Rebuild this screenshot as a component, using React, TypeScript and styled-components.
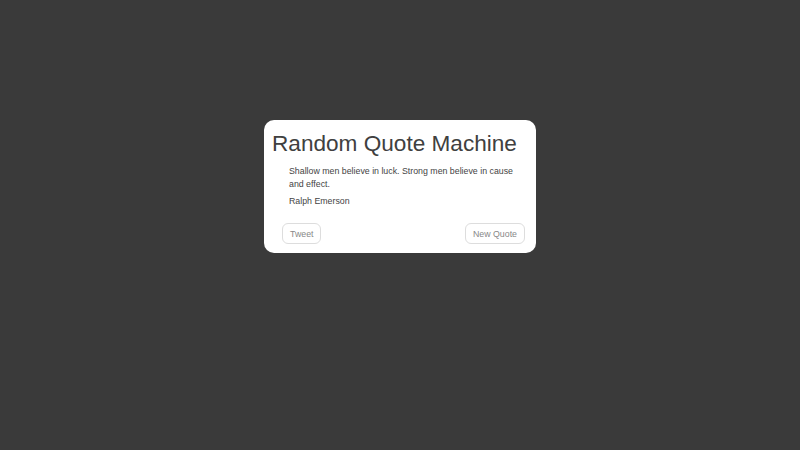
import React from 'react';
import styled, { createGlobalStyle } from 'styled-components';

const GlobalStyle = createGlobalStyle`
  html, body {
    margin: 0;
    padding: 0;
    height: 100%;
    background: #3a3a3a;
    font-family: "Liberation Sans", Arial, sans-serif;
  }
  #root {
    height: 100%;
  }
`

const quote = {
  text: 'Shallow men believe in luck. Strong men believe in cause and effect.',
  author: 'Ralph Emerson',
}

export default function App() {
  return (
    <>
      <GlobalStyle />
      <Page>
        <Card id="quote-box">
          <Title>Random Quote Machine</Title>
          <QuoteBody>
            <QuoteText id="text">{quote.text}</QuoteText>
            <Author id="author">{quote.author}</Author>
          </QuoteBody>
          <Actions>
            <Button id="tweet-quote">Tweet</Button>
            <Button id="new-quote">New Quote</Button>
          </Actions>
        </Card>
      </Page>
    </>
  );
}

const Page = styled.div`
  height: 100%;
  box-sizing: border-box;
  padding-top: 120px;
  display: flex;
  align-items: flex-start;
  justify-content: center;
`

const Card = styled.div`
  width: 272px;
  box-sizing: border-box;
  background: #fff;
  border-radius: 10px;
  padding: 11px 11px 9px 8px;
`

const Title = styled.h1`
  margin: 0;
  font-size: 22.6px;
  font-weight: 400;
  color: #404040;
  line-height: 26px;
  white-space: nowrap;
`

const QuoteBody = styled.div`
  padding: 8px 8px 0 17px;
`

const QuoteText = styled.p`
  margin: 0;
  font-size: 8.8px;
  line-height: 12.7px;
  color: #444;
`

const Author = styled.p`
  margin: 5px 0 0;
  font-size: 8.8px;
  line-height: 12.7px;
  color: #444;
`

const Actions = styled.div`
  display: flex;
  justify-content: space-between;
  padding: 15px 0 0 10px;
`

const Button = styled.button`
  font-family: inherit;
  font-size: 8.8px;
  color: #888;
  background: #fff;
  border: 1px solid #ddd;
  border-radius: 6px;
  height: 21px;
  padding: 0 7px;
  cursor: pointer;
`
